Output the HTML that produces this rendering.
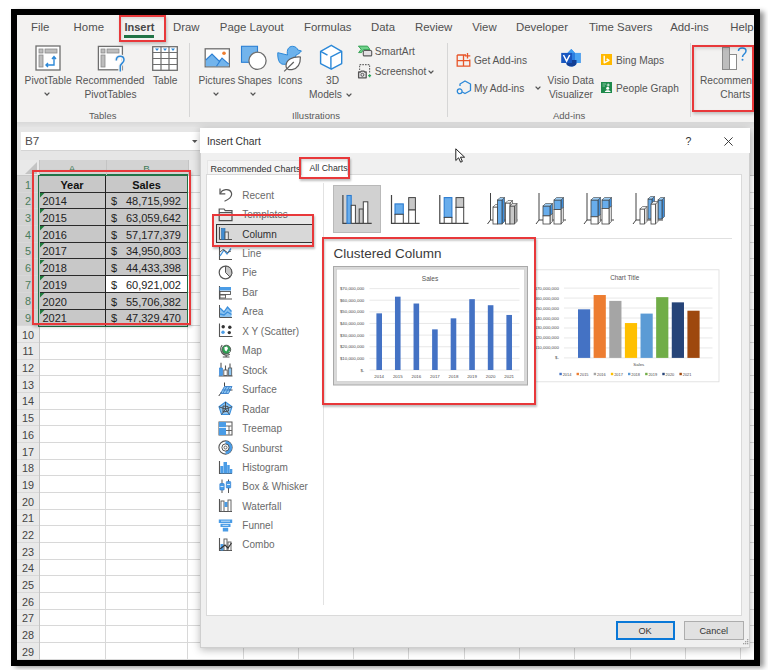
<!DOCTYPE html>
<html><head><meta charset="utf-8">
<style>
*{margin:0;padding:0;box-sizing:border-box}
html,body{width:768px;height:670px;overflow:hidden;background:#fff;font-family:"Liberation Sans",sans-serif}
.a{position:absolute}
.t{position:absolute;white-space:nowrap;line-height:1;font-family:"Liberation Sans",sans-serif}
#scr{position:absolute;left:0;top:0;width:768px;height:670px;clip-path:inset(15px 14px 10px 17px);background:#fff}
#frame{position:absolute;left:11px;top:9px;width:749px;height:657px;border:6px solid #000;box-shadow:4px 1.5px 5px rgba(0,0,0,.42)}
/* ribbon */
#ribbon{left:17px;top:15px;width:737px;height:107px;background:#f3f2f1}
.tab{font-size:11.4px;color:#505050;top:21.5px}
.rl{font-size:10.2px;color:#555;margin-top:0.8px}
.gl{font-size:9.5px;color:#5a5a5a}
.sep{width:1px;background:#d6d6d6}
/* sheet */
.rh{font-size:11px;color:#444;text-align:right}
.cell{font-size:11px;color:#111}
</style></head><body>
<div id="scr">
  <div class="a" id="ribbon"></div>
  <!-- tabs -->
  <div class="t tab" style="left:31px">File</div>
  <div class="t tab" style="left:73.6px">Home</div>
  <div class="t tab" style="left:124.4px;font-weight:bold;font-size:11px;color:#474747;top:21.5px">Insert</div>
  <div class="a" style="left:124px;top:35px;width:30px;height:3px;background:#217346"></div>
  <div class="a" style="left:118.5px;top:15.4px;width:47.6px;height:26.3px;border:2.3px solid #e8383a;box-shadow:1px 2px 3px rgba(0,0,0,.22), inset 1px 2px 3px rgba(0,0,0,.1)"></div>
  <div class="t tab" style="left:173px">Draw</div>
  <div class="t tab" style="left:219.8px">Page Layout</div>
  <div class="t tab" style="left:304px">Formulas</div>
  <div class="t tab" style="left:371px">Data</div>
  <div class="t tab" style="left:415px">Review</div>
  <div class="t tab" style="left:472.2px">View</div>
  <div class="t tab" style="left:516px">Developer</div>
  <div class="t tab" style="left:589px">Time Savers</div>
  <div class="t tab" style="left:670.2px">Add-ins</div>
  <div class="t tab" style="left:730.2px">Help</div>
  <!-- group separators -->
  <div class="a sep" style="left:189px;top:43px;height:74px"></div>
  <div class="a sep" style="left:447px;top:43px;height:74px"></div>
  <div class="a sep" style="left:690px;top:43px;height:74px"></div>
  <!-- Tables group -->
  <svg class="a" style="left:35px;top:45px" width="26" height="26" viewBox="0 0 26 26">
    <rect x="1" y="1" width="24" height="24" fill="#fff" stroke="#6e6e6e" stroke-width="1.3"/>
    <rect x="4" y="4" width="4" height="4" fill="#bdbdbd" stroke="#8a8a8a" stroke-width=".8"/>
    <rect x="10" y="4" width="12" height="4" fill="#bdbdbd" stroke="#8a8a8a" stroke-width=".8"/>
    <rect x="4" y="10" width="4" height="12" fill="#bdbdbd" stroke="#8a8a8a" stroke-width=".8"/>
    <path d="M11 20 H19 V12 M17 14 L19 11.5 L21 14 M13 18 L11 20 L13 22" fill="none" stroke="#2b88d8" stroke-width="1.4"/>
  </svg>
  <svg class="a" style="left:97px;top:45px" width="29" height="28" viewBox="0 0 29 28">
    <rect x="1.4" y="1.4" width="24" height="23.4" fill="#fff" stroke="#6e6e6e" stroke-width="1.3"/>
    <rect x="4" y="4" width="4" height="4" fill="#bdbdbd" stroke="#8a8a8a" stroke-width=".8"/>
    <rect x="10" y="4" width="12" height="4" fill="#bdbdbd" stroke="#8a8a8a" stroke-width=".8"/>
    <rect x="4" y="10" width="4" height="12" fill="#bdbdbd" stroke="#8a8a8a" stroke-width=".8"/>
    <path d="M19.3 15.5 C19.3 12.5 21.3 11.3 23.2 11.3 C25.4 11.3 27 12.8 27 15 C27 17.8 23.3 18.5 23.3 21.5 V27" fill="none" stroke="#f3f2f1" stroke-width="4"/>
    <path d="M19.3 15.5 C19.3 12.5 21.3 11.3 23.2 11.3 C25.4 11.3 27 12.8 27 15 C27 17.8 23.3 18.5 23.3 21.5 V26.5" fill="none" stroke="#2b88d8" stroke-width="1.5"/>
  </svg>
  <svg class="a" style="left:152px;top:46px" width="26" height="25" viewBox="0 0 26 25">
    <rect x="0.7" y="0.7" width="24.6" height="23.6" fill="#fff" stroke="#6e6e6e" stroke-width="1.3"/>
    <path d="M0.7 6.5 H25.3 M0.7 12.5 H25.3 M0.7 18.5 H25.3 M9 0.7 V24.3 M17 0.7 V24.3" stroke="#6e6e6e" stroke-width="1.2"/>
    <path d="M3 2.5 L7 2.5 L5 5 Z M11 2.5 L15 2.5 L13 5 Z M19 2.5 L23 2.5 L21 5 Z" fill="#2b88d8"/>
  </svg>
  <div class="t rl" style="left:24.6px;top:75.5px">PivotTable</div>
  <div class="t rl" style="left:75.4px;top:75.5px">Recommended</div>
  <div class="t rl" style="left:84.5px;top:89.5px">PivotTables</div>
  <div class="t rl" style="left:153px;top:75.5px">Table</div>
  <svg class="a" style="left:44px;top:92px" width="6" height="4" viewBox="0 0 6 4"><path d="M.6 .6 L3 3 L5.4 .6" fill="none" stroke="#555" stroke-width="1.25"/></svg>
  <div class="t gl" style="left:89px;top:110.5px">Tables</div>
  <!-- Illustrations group -->
  <svg class="a" style="left:203.5px;top:48px" width="26" height="20" viewBox="0 0 26 20">
    <rect x="1.2" y="0.8" width="24.2" height="18" fill="#fff" stroke="#6e6e6e" stroke-width="1.3"/>
    <path d="M1.8 18.2 L1.8 12 L8 6 L14.5 12.5 L18 10 L24.8 16.2 L24.8 18.2 Z" fill="#72b4ec"/>
    <path d="M1.8 12 L8 6 L16 14 M12.5 18.2 L18 10 L24.8 16.2" fill="none" stroke="#2b7fd4" stroke-width="1.1"/>
    <circle cx="20" cy="5.3" r="1.8" fill="#ed7d31"/>
  </svg>
  <svg class="a" style="left:240px;top:45px" width="28" height="26" viewBox="0 0 28 26">
    <rect x="1.5" y="1.3" width="16" height="16" fill="#72b4ec" stroke="#2b7fd4" stroke-width="1.1"/>
    <circle cx="17.5" cy="15.8" r="8.6" fill="#fff" stroke="#6e6e6e" stroke-width="1.3"/>
  </svg>
  <svg class="a" style="left:272px;top:42px" width="34" height="34" viewBox="0 0 34 34">
    <path d="M5.8 10.7 L15.5 13 C14.5 8 16.5 4.3 20.5 4.3 C23.5 4.3 25.5 6.5 25.8 8 L29.4 8.9 C28 11 26 12.5 24 13 L22 20 C19 22 14 22.5 11.2 22.3 C7 22 5.5 17 5.8 10.7 Z" fill="#6cb2ec" stroke="#2b88d8" stroke-width="1"/>
    <path d="M28.4 15 C20 14.5 14 18 14 24 C14 27.5 17 28 20 27.6 C26 26.5 28.5 21 28.4 15 Z" fill="#fff" stroke="#5e5e5e" stroke-width="1.2"/>
    <path d="M12.2 29.4 L21.8 20" fill="none" stroke="#5e5e5e" stroke-width="1.2"/>
  </svg>
  <svg class="a" style="left:314px;top:40px" width="34" height="34" viewBox="314 40 34 34">
    <path d="M331.3 45.3 L341.7 51.3 V63.6 L331.3 69.2 L320.6 63.6 V51.3 Z" fill="#fff" stroke="#2b88d8" stroke-width="1.4" stroke-linejoin="round"/>
    <path d="M341.7 51.3 L330.9 57 V69 M320.6 51.3 L327.5 55.2" fill="none" stroke="#2b88d8" stroke-width="1.4"/>
  </svg>
  <div class="t rl" style="left:198.5px;top:75.5px">Pictures</div>
  <div class="t rl" style="left:237.4px;top:75.5px">Shapes</div>
  <div class="t rl" style="left:278px;top:75.5px">Icons</div>
  <div class="t rl" style="left:326px;top:75.5px">3D</div>
  <div class="t rl" style="left:309px;top:89.5px">Models</div>
  <svg class="a" style="left:213px;top:92px" width="6" height="4" viewBox="0 0 6 4"><path d="M.6 .6 L3 3 L5.4 .6" fill="none" stroke="#555" stroke-width="1.25"/></svg>
  <svg class="a" style="left:250px;top:92px" width="6" height="4" viewBox="0 0 6 4"><path d="M.6 .6 L3 3 L5.4 .6" fill="none" stroke="#555" stroke-width="1.25"/></svg>
  <svg class="a" style="left:346px;top:93px" width="6" height="4" viewBox="0 0 6 4"><path d="M.6 .6 L3 3 L5.4 .6" fill="none" stroke="#555" stroke-width="1.25"/></svg>
  <svg class="a" style="left:357px;top:45px" width="16" height="12" viewBox="0 0 16 12">
    <path d="M1.4 1.1 L10.5 1.1 L13 4.5 L6.5 4.5 L4.5 7.6 L1.6 7.6 L4.2 4.3 Z" fill="#6fd08a" stroke="#2e9e4e" stroke-width=".9" stroke-linejoin="round"/>
    <rect x="6.3" y="5.5" width="8.4" height="5.4" rx="1" fill="#e4e0e4" stroke="#5a5a5a" stroke-width="1.1"/>
  </svg>
  <svg class="a" style="left:355px;top:62px" width="20" height="18" viewBox="0 0 20 18">
    <path d="M4.6 8 V2.6 H14.6 V11" fill="none" stroke="#666" stroke-width="1.1" stroke-dasharray="1.6 1.1"/>
    <path d="M3.6 10 H5.5 L6.3 9.2 H9 L9.8 10 H11.2 V15.8 H3.6 Z" fill="#e8e6e8" stroke="#555" stroke-width="1.3" stroke-linejoin="round"/>
    <circle cx="7.4" cy="12.8" r="1.5" fill="none" stroke="#555" stroke-width="1"/>
    <path d="M14.6 12.2 V15.2 M13.1 13.7 H16.1" stroke="#2ea55a" stroke-width="1.3"/>
  </svg>
  <div class="t rl" style="left:374.7px;top:46.5px">SmartArt</div>
  <div class="t rl" style="left:374.7px;top:66.5px">Screenshot</div>
  <svg class="a" style="left:428px;top:70px" width="6" height="4" viewBox="0 0 6 4"><path d="M.6 .6 L3 3 L5.4 .6" fill="none" stroke="#555" stroke-width="1.25"/></svg>
  <div class="t gl" style="left:292px;top:110.5px">Illustrations</div>
  <!-- Add-ins group -->
  <svg class="a" style="left:456px;top:52px" width="16" height="16" viewBox="0 0 16 16">
    <path d="M1.2 3 H10 M1.2 3 V14.2 H13.8 V7.5 M1.2 8.6 H13.8 M7.5 3 V14.2" fill="none" stroke="#e8562a" stroke-width="1.3"/>
    <path d="M11.5 1 V6.5 M8.8 3.8 H14.3" stroke="#e8562a" stroke-width="1.3"/>
  </svg>
  <svg class="a" style="left:456px;top:79.5px" width="16" height="15" viewBox="0 0 16 15">
    <path d="M4 6 V4 L9 1 L14.5 4 V10.5 L9 13.5 L6.3 12" fill="none" stroke="#2b88d8" stroke-width="1.3" stroke-linejoin="round"/>
    <circle cx="3.7" cy="11.3" r="2.4" fill="none" stroke="#2b88d8" stroke-width="1.3"/>
  </svg>
  <div class="t rl" style="left:473.9px;top:55px">Get Add-ins</div>
  <div class="t rl" style="left:473.9px;top:83px">My Add-ins</div>
  <svg class="a" style="left:535px;top:86px" width="6" height="4" viewBox="0 0 6 4"><path d="M.6 .6 L3 3 L5.4 .6" fill="none" stroke="#555" stroke-width="1.25"/></svg>
  <svg class="a" style="left:556px;top:44px" width="30" height="26" viewBox="0 0 30 26">
    <path d="M15.3 5 L19 8.9 H24.6 V19 H20.5 C20.5 21 18 22.6 15.3 22.6 C12.5 22.6 10.3 21 10.3 19 V8.9 H11.5 Z" fill="#2a7ee0"/>
    <path d="M15.3 5 L19 8.9 H11.5 Z" fill="#3d9bf0"/>
    <path d="M19 8.9 H24.6 V19 H19 Z" fill="#4aa3f2"/>
    <path d="M10.3 16 H20.5 V19 C20.5 21 18 22.6 15.3 22.6 C12.5 22.6 10.3 21 10.3 19 Z" fill="#133f94"/>
    <rect x="5.2" y="8.9" width="10.8" height="10.1" fill="#1857c0"/>
    <path d="M7.5 11 L10.6 17 L13.7 11" fill="none" stroke="#fff" stroke-width="1.5"/>
  </svg>
  <div class="t rl" style="left:547.6px;top:75.5px">Visio Data</div>
  <div class="t rl" style="left:549px;top:89.5px">Visualizer</div>
  <svg class="a" style="left:600.5px;top:53.5px" width="11" height="11" viewBox="0 0 11 11">
    <rect x="0" y="0" width="11" height="11" fill="#ffb900"/>
    <path d="M3.2 1.8 V8.8 L8 6.4 L5.6 4.8" fill="none" stroke="#fff" stroke-width="1.4" stroke-linejoin="round"/>
  </svg>
  <svg class="a" style="left:600.5px;top:81.5px" width="11" height="11" viewBox="0 0 11 11">
    <rect x="0" y="0" width="11" height="11" fill="#1f8a4c"/>
    <path d="M1.5 2 H5 M1.5 4 H4" stroke="#9fd8b5" stroke-width=".8"/>
    <path d="M7.2 1.5 V4.5 M5.7 3 H8.7" stroke="#fff" stroke-width=".8"/>
    <circle cx="6.7" cy="6.3" r="1.5" fill="#fff"/>
    <path d="M3.8 10 C4 7.5 9.5 7.5 9.7 10 Z" fill="#fff"/>
  </svg>
  <div class="t rl" style="left:616px;top:55px">Bing Maps</div>
  <div class="t rl" style="left:616px;top:83px">People Graph</div>
  <div class="t gl" style="left:553px;top:110.5px">Add-ins</div>
  <!-- Recommended Charts -->
  <svg class="a" style="left:721px;top:46px" width="28" height="25" viewBox="0 0 28 25">
    <rect x="1.5" y="1.5" width="7" height="22" fill="#bdbdbd" stroke="#8a8a8a" stroke-width="1"/>
    <rect x="8.5" y="8.5" width="7" height="15" fill="#fff" stroke="#8a8a8a" stroke-width="1"/>
    <path d="M17.5 5 C17.5 1 25 1 25 5 C25 8 21.5 8 21.5 11" fill="none" stroke="#2b88d8" stroke-width="1.5"/>
    <circle cx="21.5" cy="13.8" r="1" fill="#2b88d8"/>
  </svg>
  <div class="t rl" style="left:699.9px;top:75.5px">Recommended</div>
  <div class="t rl" style="left:720.3px;top:89.5px">Charts</div>
  <div class="a" style="left:691.5px;top:45px;width:62.5px;height:67px;border:2.2px solid #e8383a;box-shadow:1px 2px 3px rgba(0,0,0,.22), inset 1px 2px 3px rgba(0,0,0,.12)"></div>

  <div class="a" style="left:17px;top:122px;width:737px;height:5px;background:linear-gradient(#d9d9d9,#e3e3e3)"></div>
  <!-- formula bar area -->
  <div class="a" style="left:17px;top:127px;width:737px;height:33px;background:#e6e6e6"></div>
  <div class="a" style="left:21px;top:132px;width:184px;height:19px;background:#fff;border-bottom:1px solid #d4d4d4"></div>
  <svg class="a" style="left:191.5px;top:139.5px" width="6" height="4" viewBox="0 0 6 4"><path d="M0 0 H5.5 L2.75 3 Z" fill="#555"/></svg>
  <div class="t" style="left:25px;top:136px;font-size:11.8px;color:#505050">B7</div>
  <!-- column headers -->
  <div class="a" style="left:17px;top:160px;width:737px;height:16px;background:#e9e9e9;border-bottom:1px solid #c8c8c8"></div>
  <div class="a" style="left:39px;top:160px;width:149px;height:16px;background:#d3d3d3;border-bottom:2px solid #217346"></div>
  <svg class="a" style="left:17px;top:160px" width="22" height="16" viewBox="0 0 22 16"><path d="M20 2 L20 14 L8 14 Z" fill="#c4c4c4"/></svg>
  <div class="a" style="left:39.0px;top:160px;width:1px;height:15.6px;background:#c4c4c4"></div>
  <div class="a" style="left:105.5px;top:160px;width:1px;height:15.6px;background:#c4c4c4"></div>
  <div class="a" style="left:187.5px;top:160px;width:1px;height:15.6px;background:#c4c4c4"></div>
  <div class="a" style="left:243.25px;top:160px;width:1px;height:15.6px;background:#c4c4c4"></div>
  <div class="a" style="left:298.50px;top:160px;width:1px;height:15.6px;background:#c4c4c4"></div>
  <div class="a" style="left:353.75px;top:160px;width:1px;height:15.6px;background:#c4c4c4"></div>
  <div class="a" style="left:409.00px;top:160px;width:1px;height:15.6px;background:#c4c4c4"></div>
  <div class="a" style="left:464.25px;top:160px;width:1px;height:15.6px;background:#c4c4c4"></div>
  <div class="a" style="left:519.50px;top:160px;width:1px;height:15.6px;background:#c4c4c4"></div>
  <div class="a" style="left:574.75px;top:160px;width:1px;height:15.6px;background:#c4c4c4"></div>
  <div class="a" style="left:630.00px;top:160px;width:1px;height:15.6px;background:#c4c4c4"></div>
  <div class="a" style="left:685.25px;top:160px;width:1px;height:15.6px;background:#c4c4c4"></div>
  <div class="a" style="left:740.50px;top:160px;width:1px;height:15.6px;background:#c4c4c4"></div>
  <div class="a" style="left:795.75px;top:160px;width:1px;height:15.6px;background:#c4c4c4"></div>
  <div class="t" style="left:68.8px;top:163.5px;font-size:9.8px;color:#3f7a56">A</div>
  <div class="t" style="left:143.3px;top:163.5px;font-size:9.8px;color:#3f7a56">B</div>
  <!-- grid -->
  <div class="a" style="left:17px;top:175.6px;width:737px;height:490px;background:#fff"></div>
  <div class="a" style="left:17px;top:175.6px;width:22px;height:490px;background:#e9e9e9"></div>
  <div class="a" style="left:17px;top:175.6px;width:22px;height:150.12px;background:#d3d3d3"></div>
  <div class="a" style="left:39px;top:175.6px;width:149px;height:150.12px;background:#c8c8c8"></div>
  <div class="a" style="left:105.5px;top:275.68px;width:82px;height:16.68px;background:#fff"></div>
  <div class="a" style="left:17px;top:192px;width:737px;height:1px;background:#d8d8d8"></div>
  <div class="a" style="left:17px;top:208px;width:737px;height:1px;background:#d8d8d8"></div>
  <div class="a" style="left:17px;top:225px;width:737px;height:1px;background:#d8d8d8"></div>
  <div class="a" style="left:17px;top:242px;width:737px;height:1px;background:#d8d8d8"></div>
  <div class="a" style="left:17px;top:258px;width:737px;height:1px;background:#d8d8d8"></div>
  <div class="a" style="left:17px;top:275px;width:737px;height:1px;background:#d8d8d8"></div>
  <div class="a" style="left:17px;top:292px;width:737px;height:1px;background:#d8d8d8"></div>
  <div class="a" style="left:17px;top:309px;width:737px;height:1px;background:#d8d8d8"></div>
  <div class="a" style="left:17px;top:325px;width:737px;height:1px;background:#d8d8d8"></div>
  <div class="a" style="left:17px;top:342px;width:737px;height:1px;background:#d8d8d8"></div>
  <div class="a" style="left:17px;top:359px;width:737px;height:1px;background:#d8d8d8"></div>
  <div class="a" style="left:17px;top:375px;width:737px;height:1px;background:#d8d8d8"></div>
  <div class="a" style="left:17px;top:392px;width:737px;height:1px;background:#d8d8d8"></div>
  <div class="a" style="left:17px;top:409px;width:737px;height:1px;background:#d8d8d8"></div>
  <div class="a" style="left:17px;top:425px;width:737px;height:1px;background:#d8d8d8"></div>
  <div class="a" style="left:17px;top:442px;width:737px;height:1px;background:#d8d8d8"></div>
  <div class="a" style="left:17px;top:459px;width:737px;height:1px;background:#d8d8d8"></div>
  <div class="a" style="left:17px;top:475px;width:737px;height:1px;background:#d8d8d8"></div>
  <div class="a" style="left:17px;top:492px;width:737px;height:1px;background:#d8d8d8"></div>
  <div class="a" style="left:17px;top:509px;width:737px;height:1px;background:#d8d8d8"></div>
  <div class="a" style="left:17px;top:525px;width:737px;height:1px;background:#d8d8d8"></div>
  <div class="a" style="left:17px;top:542px;width:737px;height:1px;background:#d8d8d8"></div>
  <div class="a" style="left:17px;top:559px;width:737px;height:1px;background:#d8d8d8"></div>
  <div class="a" style="left:17px;top:575px;width:737px;height:1px;background:#d8d8d8"></div>
  <div class="a" style="left:17px;top:592px;width:737px;height:1px;background:#d8d8d8"></div>
  <div class="a" style="left:17px;top:609px;width:737px;height:1px;background:#d8d8d8"></div>
  <div class="a" style="left:17px;top:625px;width:737px;height:1px;background:#d8d8d8"></div>
  <div class="a" style="left:17px;top:642px;width:737px;height:1px;background:#d8d8d8"></div>
  <div class="a" style="left:17px;top:659px;width:737px;height:1px;background:#d8d8d8"></div>
  <div class="a" style="left:39px;top:192px;width:149px;height:1px;background:#2a2a2a"></div>
  <div class="a" style="left:39px;top:208px;width:149px;height:1px;background:#2a2a2a"></div>
  <div class="a" style="left:39px;top:225px;width:149px;height:1px;background:#2a2a2a"></div>
  <div class="a" style="left:39px;top:242px;width:149px;height:1px;background:#2a2a2a"></div>
  <div class="a" style="left:39px;top:258px;width:149px;height:1px;background:#2a2a2a"></div>
  <div class="a" style="left:39px;top:275px;width:149px;height:1px;background:#2a2a2a"></div>
  <div class="a" style="left:39px;top:292px;width:149px;height:1px;background:#2a2a2a"></div>
  <div class="a" style="left:39px;top:309px;width:149px;height:1px;background:#2a2a2a"></div>
  <div class="a" style="left:38.5px;top:175.6px;width:1px;height:490px;background:#c4c4c4"></div>
  <div class="a" style="left:105px;top:175.6px;width:1px;height:490px;background:#d8d8d8"></div>
  <div class="a" style="left:187px;top:175.6px;width:1px;height:490px;background:#d8d8d8"></div>
  <div class="a" style="left:243px;top:175.6px;width:1px;height:490px;background:#d8d8d8"></div>
  <div class="a" style="left:298px;top:175.6px;width:1px;height:490px;background:#d8d8d8"></div>
  <div class="a" style="left:353px;top:175.6px;width:1px;height:490px;background:#d8d8d8"></div>
  <div class="a" style="left:408px;top:175.6px;width:1px;height:490px;background:#d8d8d8"></div>
  <div class="a" style="left:464px;top:175.6px;width:1px;height:490px;background:#d8d8d8"></div>
  <div class="a" style="left:519px;top:175.6px;width:1px;height:490px;background:#d8d8d8"></div>
  <div class="a" style="left:574px;top:175.6px;width:1px;height:490px;background:#d8d8d8"></div>
  <div class="a" style="left:630px;top:175.6px;width:1px;height:490px;background:#d8d8d8"></div>
  <div class="a" style="left:685px;top:175.6px;width:1px;height:490px;background:#d8d8d8"></div>
  <div class="a" style="left:740px;top:175.6px;width:1px;height:490px;background:#d8d8d8"></div>
  <div class="a" style="left:795px;top:175.6px;width:1px;height:490px;background:#d8d8d8"></div>
  <div class="a" style="left:105px;top:175.6px;width:1px;height:150.12px;background:#222"></div>
  <div class="t" style="left:17px;width:22px;text-align:center;top:179.64px;font-size:10.8px;color:#4a7d5c">1</div>
  <div class="t" style="left:17px;width:22px;text-align:center;top:196.32px;font-size:10.8px;color:#4a7d5c">2</div>
  <div class="t" style="left:17px;width:22px;text-align:center;top:213.00px;font-size:10.8px;color:#4a7d5c">3</div>
  <div class="t" style="left:17px;width:22px;text-align:center;top:229.68px;font-size:10.8px;color:#4a7d5c">4</div>
  <div class="t" style="left:17px;width:22px;text-align:center;top:246.36px;font-size:10.8px;color:#4a7d5c">5</div>
  <div class="t" style="left:17px;width:22px;text-align:center;top:263.04px;font-size:10.8px;color:#4a7d5c">6</div>
  <div class="t" style="left:17px;width:22px;text-align:center;top:279.72px;font-size:10.8px;color:#4a7d5c">7</div>
  <div class="t" style="left:17px;width:22px;text-align:center;top:296.40px;font-size:10.8px;color:#4a7d5c">8</div>
  <div class="t" style="left:17px;width:22px;text-align:center;top:313.08px;font-size:10.8px;color:#4a7d5c">9</div>
  <div class="t" style="left:17px;width:22px;text-align:center;top:329.76px;font-size:10.8px;color:#444">10</div>
  <div class="t" style="left:17px;width:22px;text-align:center;top:346.44px;font-size:10.8px;color:#444">11</div>
  <div class="t" style="left:17px;width:22px;text-align:center;top:363.12px;font-size:10.8px;color:#444">12</div>
  <div class="t" style="left:17px;width:22px;text-align:center;top:379.80px;font-size:10.8px;color:#444">13</div>
  <div class="t" style="left:17px;width:22px;text-align:center;top:396.48px;font-size:10.8px;color:#444">14</div>
  <div class="t" style="left:17px;width:22px;text-align:center;top:413.16px;font-size:10.8px;color:#444">15</div>
  <div class="t" style="left:17px;width:22px;text-align:center;top:429.84px;font-size:10.8px;color:#444">16</div>
  <div class="t" style="left:17px;width:22px;text-align:center;top:446.52px;font-size:10.8px;color:#444">17</div>
  <div class="t" style="left:17px;width:22px;text-align:center;top:463.20px;font-size:10.8px;color:#444">18</div>
  <div class="t" style="left:17px;width:22px;text-align:center;top:479.88px;font-size:10.8px;color:#444">19</div>
  <div class="t" style="left:17px;width:22px;text-align:center;top:496.56px;font-size:10.8px;color:#444">20</div>
  <div class="t" style="left:17px;width:22px;text-align:center;top:513.24px;font-size:10.8px;color:#444">21</div>
  <div class="t" style="left:17px;width:22px;text-align:center;top:529.92px;font-size:10.8px;color:#444">22</div>
  <div class="t" style="left:17px;width:22px;text-align:center;top:546.60px;font-size:10.8px;color:#444">23</div>
  <div class="t" style="left:17px;width:22px;text-align:center;top:563.28px;font-size:10.8px;color:#444">24</div>
  <div class="t" style="left:17px;width:22px;text-align:center;top:579.96px;font-size:10.8px;color:#444">25</div>
  <div class="t" style="left:17px;width:22px;text-align:center;top:596.64px;font-size:10.8px;color:#444">26</div>
  <div class="t" style="left:17px;width:22px;text-align:center;top:613.32px;font-size:10.8px;color:#444">27</div>
  <div class="t" style="left:17px;width:22px;text-align:center;top:630.00px;font-size:10.8px;color:#444">28</div>
  <div class="t" style="left:17px;width:22px;text-align:center;top:646.68px;font-size:10.8px;color:#444">29</div>
  <div class="t" style="left:39px;width:66px;text-align:center;top:179.54px;font-size:11px;font-weight:bold;color:#111">Year</div>
  <div class="t" style="left:105.5px;width:82px;text-align:center;top:179.54px;font-size:11px;font-weight:bold;color:#111">Sales</div>
  <div class="t" style="left:42.5px;top:196.42px;font-size:11px;color:#222">2014</div>
  <div class="t" style="left:111px;top:196.42px;font-size:11px;color:#222">$</div>
  <div class="t" style="left:120px;width:61px;text-align:right;top:196.42px;font-size:11px;color:#222">48,715,992</div>
  <svg class="a" style="left:40px;top:192.78px" width="5" height="5" viewBox="0 0 5 5"><path d="M0 0 H4.5 L0 4.5 Z" fill="#1e7a3c"/></svg>
  <div class="t" style="left:42.5px;top:213.10px;font-size:11px;color:#222">2015</div>
  <div class="t" style="left:111px;top:213.10px;font-size:11px;color:#222">$</div>
  <div class="t" style="left:120px;width:61px;text-align:right;top:213.10px;font-size:11px;color:#222">63,059,642</div>
  <svg class="a" style="left:40px;top:209.46px" width="5" height="5" viewBox="0 0 5 5"><path d="M0 0 H4.5 L0 4.5 Z" fill="#1e7a3c"/></svg>
  <div class="t" style="left:42.5px;top:229.78px;font-size:11px;color:#222">2016</div>
  <div class="t" style="left:111px;top:229.78px;font-size:11px;color:#222">$</div>
  <div class="t" style="left:120px;width:61px;text-align:right;top:229.78px;font-size:11px;color:#222">57,177,379</div>
  <svg class="a" style="left:40px;top:226.14px" width="5" height="5" viewBox="0 0 5 5"><path d="M0 0 H4.5 L0 4.5 Z" fill="#1e7a3c"/></svg>
  <div class="t" style="left:42.5px;top:246.46px;font-size:11px;color:#222">2017</div>
  <div class="t" style="left:111px;top:246.46px;font-size:11px;color:#222">$</div>
  <div class="t" style="left:120px;width:61px;text-align:right;top:246.46px;font-size:11px;color:#222">34,950,803</div>
  <svg class="a" style="left:40px;top:242.82px" width="5" height="5" viewBox="0 0 5 5"><path d="M0 0 H4.5 L0 4.5 Z" fill="#1e7a3c"/></svg>
  <div class="t" style="left:42.5px;top:263.14px;font-size:11px;color:#222">2018</div>
  <div class="t" style="left:111px;top:263.14px;font-size:11px;color:#222">$</div>
  <div class="t" style="left:120px;width:61px;text-align:right;top:263.14px;font-size:11px;color:#222">44,433,398</div>
  <svg class="a" style="left:40px;top:259.50px" width="5" height="5" viewBox="0 0 5 5"><path d="M0 0 H4.5 L0 4.5 Z" fill="#1e7a3c"/></svg>
  <div class="t" style="left:42.5px;top:279.82px;font-size:11px;color:#222">2019</div>
  <div class="t" style="left:111px;top:279.82px;font-size:11px;color:#222">$</div>
  <div class="t" style="left:120px;width:61px;text-align:right;top:279.82px;font-size:11px;color:#222">60,921,002</div>
  <svg class="a" style="left:40px;top:276.18px" width="5" height="5" viewBox="0 0 5 5"><path d="M0 0 H4.5 L0 4.5 Z" fill="#1e7a3c"/></svg>
  <div class="t" style="left:42.5px;top:296.50px;font-size:11px;color:#222">2020</div>
  <div class="t" style="left:111px;top:296.50px;font-size:11px;color:#222">$</div>
  <div class="t" style="left:120px;width:61px;text-align:right;top:296.50px;font-size:11px;color:#222">55,706,382</div>
  <svg class="a" style="left:40px;top:292.86px" width="5" height="5" viewBox="0 0 5 5"><path d="M0 0 H4.5 L0 4.5 Z" fill="#1e7a3c"/></svg>
  <div class="t" style="left:42.5px;top:313.18px;font-size:11px;color:#222">2021</div>
  <div class="t" style="left:111px;top:313.18px;font-size:11px;color:#222">$</div>
  <div class="t" style="left:120px;width:61px;text-align:right;top:313.18px;font-size:11px;color:#222">47,329,470</div>
  <svg class="a" style="left:40px;top:309.54px" width="5" height="5" viewBox="0 0 5 5"><path d="M0 0 H4.5 L0 4.5 Z" fill="#1e7a3c"/></svg>
  <div class="a" style="left:38.2px;top:175px;width:150.2px;height:152px;border:1.5px solid #217346"></div>
  <div class="a" style="left:31.8px;top:170px;width:159.2px;height:155.4px;border:2.5px solid #e8383a;box-shadow:1px 2px 3px rgba(0,0,0,.22)"></div>
  <!-- dialog -->
  <div class="a" style="left:200px;top:128px;width:550px;height:520px;background:#f0f0f0;box-shadow:0 2px 8px rgba(0,0,0,.28);border:1px solid #cfcfcf"></div>
  <div class="a" style="left:200px;top:128px;width:550px;height:25.2px;background:#fff"></div>
  <div class="t" style="left:207px;top:137.3px;font-size:10.3px;color:#333">Insert Chart</div>
  <div class="t" style="left:685.5px;top:135.5px;font-size:10.5px;color:#333">?</div>
  <svg class="a" style="left:724px;top:136.5px" width="9" height="9" viewBox="0 0 9 9"><path d="M.4 .4 L8.6 8.6 M8.6 .4 L.4 8.6" stroke="#333" stroke-width="0.95"/></svg>
  <div class="a" style="left:207px;top:160px;width:95px;height:16px;background:#f5f5f5;border:1px solid #e6e6e6;border-bottom:none"></div>
  <div class="t" style="left:210.5px;top:165px;font-size:9px;color:#333">Recommended Charts</div>
  <div class="a" style="left:301px;top:158px;width:47px;height:18px;background:#fff;border:1px solid #dcdcdc;border-bottom:none"></div>
  <div class="t" style="left:309.5px;top:163.5px;font-size:8.8px;color:#333">All Charts</div>
  <div class="a" style="left:205.5px;top:174.4px;width:536.5px;height:442.1px;background:#fff;border:1px solid #dadada"></div>
  <div class="a" style="left:323px;top:183px;width:1px;height:422px;background:#e2e2e2"></div>
  <div class="a" style="left:302px;top:173.5px;width:45px;height:2.5px;background:#fff"></div>
  <div class="a" style="left:299px;top:156.8px;width:50.7px;height:22.4px;border:2.3px solid #e8383a;box-shadow:1px 2px 2px rgba(0,0,0,.25), inset 1px 2px 3px rgba(0,0,0,.15)"></div>
  <!-- list -->
  <div class="a" style="left:216px;top:224px;width:97px;height:19px;background:#eeeeee;border:1px solid #3a3a3a;border-width:1.2px 0 1.2px 1px"></div>
  <div class="t" style="left:242.3px;top:190.8px;font-size:10px;color:#6a6a6a">Recent</div>
  <svg class="a" style="left:218px;top:187.4px" width="15" height="15" viewBox="0 0 15 15"><path d="M2 1.5 V6.8 H7.3" fill="none" stroke="#555" stroke-width="1.2"/><path d="M2.3 6.6 C4 2 11.5 1 13.3 5.5 C14.5 9 12 12 6.5 14.2" fill="none" stroke="#555" stroke-width="1.2"/></svg>
  <div class="t" style="left:242.3px;top:210.2px;font-size:10px;color:#6a6a6a">Templates</div>
  <svg class="a" style="left:218px;top:206.8px" width="15" height="15" viewBox="0 0 15 15"><path d="M1.2 2 H6 L7.2 3.6 H14 V13.6 H1.2 Z M1.2 5.6 H14" fill="none" stroke="#555" stroke-width="1.2"/></svg>
  <div class="t" style="left:242.3px;top:230.1px;font-size:10px;color:#333">Column</div>
  <svg class="a" style="left:218px;top:226.0px" width="15" height="15" viewBox="0 0 15 15"><path d="M1.5 1 V13.5 H14" fill="none" stroke="#555" stroke-width="1"/><rect x="3.5" y="2.5" width="3.5" height="11" fill="#4a9ce6" stroke="#2a78c0" stroke-width=".6"/><rect x="7" y="6" width="3.3" height="7.5" fill="#fff" stroke="#555" stroke-width=".9"/></svg>
  <div class="t" style="left:242.3px;top:248.9px;font-size:10px;color:#6a6a6a">Line</div>
  <svg class="a" style="left:218px;top:245.5px" width="15" height="15" viewBox="0 0 15 15"><path d="M1.5 1 V13.5 H14" fill="none" stroke="#555" stroke-width="1.1"/><path d="M2 10 L6 4 L9 8 L13 2.5" fill="none" stroke="#3b8fdc" stroke-width="1.3"/><path d="M2 6 L5 3.5 L9.5 6.5 L13 5" fill="none" stroke="#555" stroke-width="1"/></svg>
  <div class="t" style="left:242.3px;top:268.4px;font-size:10px;color:#6a6a6a">Pie</div>
  <svg class="a" style="left:218px;top:265.0px" width="15" height="15" viewBox="0 0 15 15"><circle cx="7.5" cy="7.5" r="6.3" fill="#fff" stroke="#555" stroke-width="1.2"/><path d="M7.5 1.2 V7.5 L12 12 A6.3 6.3 0 0 0 7.5 1.2 Z" fill="#c6c6c6" stroke="#555" stroke-width="1"/></svg>
  <div class="t" style="left:242.3px;top:287.9px;font-size:10px;color:#6a6a6a">Bar</div>
  <svg class="a" style="left:218px;top:284.5px" width="15" height="15" viewBox="0 0 15 15"><path d="M1.5 1 V14 H14" fill="none" stroke="#555" stroke-width="1.1"/><rect x="1.5" y="2" width="11.5" height="3.5" fill="#4a9ce6"/><rect x="2" y="6.5" width="10.5" height="3" fill="#fff" stroke="#555" stroke-width=".9"/><rect x="2" y="10" width="5.5" height="3" fill="#fff" stroke="#555" stroke-width=".9"/></svg>
  <div class="t" style="left:242.3px;top:307.4px;font-size:10px;color:#6a6a6a">Area</div>
  <svg class="a" style="left:218px;top:304.0px" width="15" height="15" viewBox="0 0 15 15"><path d="M1.5 1 V13.5 H14" fill="none" stroke="#555" stroke-width="1"/><path d="M2 4 L6 8 L9.5 3 L13.5 7.5 V13 H2 Z" fill="#8cc3f0"/><path d="M2 4 L6 8 L9.5 3 L13.5 7.5 M2 10 L6 11 L9.5 8 L13.5 10.5" fill="none" stroke="#3b8fdc" stroke-width="1.3"/></svg>
  <div class="t" style="left:242.3px;top:326.6px;font-size:10px;color:#6a6a6a">X Y (Scatter)</div>
  <svg class="a" style="left:218px;top:323.2px" width="15" height="15" viewBox="0 0 15 15"><path d="M1.5 0.5 V13.5 H14.5" fill="none" stroke="#555" stroke-width="1.1"/><circle cx="5.2" cy="3.8" r="1.7" fill="#333"/><circle cx="11.8" cy="4.3" r="1.7" fill="#333"/><circle cx="11.3" cy="9.6" r="1.7" fill="#333"/><circle cx="5" cy="9.3" r="1.7" fill="#4a9ce6"/></svg>
  <div class="t" style="left:242.3px;top:345.9px;font-size:10px;color:#6a6a6a">Map</div>
  <svg class="a" style="left:218px;top:342.5px" width="15" height="15" viewBox="0 0 15 15"><path d="M4.2 2.2 A6 6 0 0 0 11.8 11.3" fill="none" stroke="#555" stroke-width="1.2"/><circle cx="8.3" cy="6.6" r="4.4" fill="#2f9e52" stroke="#555" stroke-width=".9"/><path d="M6.3 4.3 L9 3.6 L10 5.6 L8.3 8.5 L6.8 7.3 Z M10.5 8.5 L11.5 7.8 L11.6 9.2 Z" fill="#fff"/><path d="M8.2 12.5 V13.8 M4.8 14 H11.5" fill="none" stroke="#555" stroke-width="1.2"/></svg>
  <div class="t" style="left:242.3px;top:365.5px;font-size:10px;color:#6a6a6a">Stock</div>
  <svg class="a" style="left:218px;top:362.1px" width="15" height="15" viewBox="0 0 15 15"><path d="M0.8 14 H14.5" stroke="#555" stroke-width="1"/><path d="M3 0.8 V6 M7.5 3.5 V8 M12 1.5 V6" stroke="#555" stroke-width="1.1"/><rect x="1.3" y="6" width="3.4" height="7.5" fill="#4a9ce6" stroke="#2a7bd0" stroke-width=".5"/><rect x="5.8" y="8" width="3.4" height="5.5" fill="#fff" stroke="#555" stroke-width=".9"/><rect x="10.3" y="6" width="3.4" height="7.5" fill="#8cc6f2" stroke="#555" stroke-width=".8"/></svg>
  <div class="t" style="left:242.3px;top:385.3px;font-size:10px;color:#6a6a6a">Surface</div>
  <svg class="a" style="left:218px;top:381.9px" width="15" height="15" viewBox="0 0 15 15"><path d="M2.5 11.5 L6.5 4.5 H14 L10.5 11.5 Z" fill="#8cc6f2"/><path d="M6.5 0.5 V4.5 M0.8 14 L3.5 10 M11 8 H14.5" fill="none" stroke="#444" stroke-width="1"/><path d="M2.5 11.5 L6.5 4.5 H14 L10.5 11.5 Z M4.5 8 H12.3 M8.8 4.5 L4.9 11.5 M11.5 4.5 L7.7 11.5" fill="none" stroke="#3a7fc9" stroke-width=".9"/></svg>
  <div class="t" style="left:242.3px;top:404.6px;font-size:10px;color:#6a6a6a">Radar</div>
  <svg class="a" style="left:218px;top:401.2px" width="15" height="15" viewBox="0 0 15 15"><path d="M7.5 1 L14 5.8 L11.5 13.5 L3.5 13.5 L1 5.8 Z" fill="#8cc3f0" stroke="#3b8fdc" stroke-width="1.1"/><path d="M7.5 1 L7.5 8 M14 5.8 L7.5 8 M11.5 13.5 L7.5 8 M3.5 13.5 L7.5 8 M1 5.8 L7.5 8 M5 5 L10 5.5 L10.5 10 L5 11 Z" fill="none" stroke="#444" stroke-width=".9"/></svg>
  <div class="t" style="left:242.3px;top:423.9px;font-size:10px;color:#6a6a6a">Treemap</div>
  <svg class="a" style="left:218px;top:420.5px" width="15" height="15" viewBox="0 0 15 15"><rect x="1" y="1" width="13" height="13" fill="#fff" stroke="#555" stroke-width="1"/><rect x="1" y="1" width="7" height="13" fill="#4a9ce6"/><path d="M1 6.5 H8 M8 5 H14 M11 5 V14 M8 9.5 H14" stroke="#fff" stroke-width=".8"/><path d="M8 5 H14 M11 5 V14 M8 9.5 H14" stroke="#555" stroke-width=".9"/></svg>
  <div class="t" style="left:242.3px;top:443.5px;font-size:10px;color:#6a6a6a">Sunburst</div>
  <svg class="a" style="left:218px;top:440.1px" width="15" height="15" viewBox="0 0 15 15"><circle cx="7.5" cy="7.5" r="6.6" fill="#fff" stroke="#555" stroke-width="1.1"/><path d="M7.5 0.9 A6.6 6.6 0 0 1 7.5 14.1 V11 A3.5 3.5 0 0 0 7.5 4 Z" fill="#4a9ce6"/><circle cx="7.5" cy="7.5" r="3.6" fill="none" stroke="#555" stroke-width="1"/><circle cx="7.5" cy="7.5" r="1.5" fill="none" stroke="#555" stroke-width=".9"/></svg>
  <div class="t" style="left:242.3px;top:462.9px;font-size:10px;color:#6a6a6a">Histogram</div>
  <svg class="a" style="left:218px;top:459.5px" width="15" height="15" viewBox="0 0 15 15"><path d="M1.5 1 V13.5 H14" fill="none" stroke="#555" stroke-width="1.1"/><rect x="2.3" y="6" width="3" height="7.5" fill="#4a9ce6"/><rect x="5.5" y="2" width="3.5" height="11.5" fill="#4a9ce6"/><rect x="9.2" y="5" width="2.5" height="8.5" fill="#4a9ce6"/><rect x="11.8" y="9" width="2.5" height="4.5" fill="#4a9ce6"/></svg>
  <div class="t" style="left:242.3px;top:481.9px;font-size:10px;color:#6a6a6a">Box &amp; Whisker</div>
  <svg class="a" style="left:218px;top:478.5px" width="15" height="15" viewBox="0 0 15 15"><path d="M4 0.5 V14 M10.5 0.5 V14" stroke="#555" stroke-width="1"/><rect x="1.8" y="4.5" width="4.4" height="6.5" rx=".6" fill="#4a9ce6" stroke="#2a7bd0" stroke-width=".6"/><rect x="8.3" y="2.5" width="4.4" height="6.5" rx=".6" fill="#4a9ce6" stroke="#2a7bd0" stroke-width=".6"/><path d="M2.5 7.5 H5.5 M9 5.5 H12" stroke="#fff" stroke-width=".8"/></svg>
  <div class="t" style="left:242.3px;top:501.7px;font-size:10px;color:#6a6a6a">Waterfall</div>
  <svg class="a" style="left:218px;top:498.3px" width="15" height="15" viewBox="0 0 15 15"><path d="M1.5 1 V13.5 H14" fill="none" stroke="#555" stroke-width="1.1"/><rect x="3" y="3" width="3" height="10.5" fill="#fff" stroke="#555" stroke-width=".9"/><rect x="6.5" y="4" width="3" height="5" fill="#4a9ce6"/><rect x="10" y="2" width="3" height="11.5" fill="#fff" stroke="#555" stroke-width=".9"/></svg>
  <div class="t" style="left:242.3px;top:520.9px;font-size:10px;color:#6a6a6a">Funnel</div>
  <svg class="a" style="left:218px;top:517.5px" width="15" height="15" viewBox="0 0 15 15"><path d="M0.8 1.5 H14.2 V5 H0.8 Z M2.5 5.8 H12.5 V9 H2.5 Z M4.8 9.8 H10.2 V13.5 H4.8 Z" fill="#4a9ce6"/><path d="M3 3.2 H12 M4.5 7.4 H10.5" stroke="#fff" stroke-width=".7"/></svg>
  <div class="t" style="left:242.3px;top:540.4px;font-size:10px;color:#6a6a6a">Combo</div>
  <svg class="a" style="left:218px;top:537.0px" width="15" height="15" viewBox="0 0 15 15"><path d="M1.5 1 V13.5 H14" fill="none" stroke="#555" stroke-width="1.1"/><rect x="2.5" y="7" width="3" height="6.5" fill="#4a9ce6"/><rect x="6" y="2" width="3" height="11.5" fill="#fff" stroke="#555" stroke-width=".9"/><rect x="10" y="5" width="3" height="8.5" fill="#fff" stroke="#555" stroke-width=".9"/><path d="M2 12 L7 8 L10 11 L13.5 6" fill="none" stroke="#333" stroke-width="1.2"/></svg>
  <div class="a" style="left:211.5px;top:214px;width:102px;height:33px;border:2.4px solid #e8383a;background:rgba(0,0,0,.09);box-shadow:1px 2px 2px rgba(0,0,0,.25)"></div>
  <!-- chart type icons -->
  <div class="a" style="left:333px;top:185px;width:48px;height:48px;background:#d1d1d1;border:1px solid #b9b9b9"></div>
  <svg class="a" style="left:330px;top:182px" width="400" height="54" viewBox="330 182 400 54">
<g stroke="#434343" stroke-width="1.2" fill="none"><path d="M342.9 195 V223.3 H371.7"/><path d="M391.5 195 V223.3 H419.6"/><path d="M439.8 195 V223.3 H468.5"/></g>
<rect x="347" y="195.5" width="4.2" height="27.8" fill="#68adec" stroke="#2a7bd0" stroke-width="1.1"/>
<rect x="351.2" y="205.3" width="4.2" height="18" fill="#fff" stroke="#434343" stroke-width="1"/>
<rect x="359.2" y="209" width="4.1" height="14.3" fill="#c8c8c8" stroke="#434343" stroke-width="1"/>
<rect x="363.3" y="201.8" width="4.5" height="21.5" fill="#fff" stroke="#434343" stroke-width="1"/>
<rect x="395" y="203.9" width="8.3" height="10.4" fill="#68adec" stroke="#2a7bd0" stroke-width="1.1"/>
<rect x="395" y="214.3" width="8.3" height="9" fill="#fff" stroke="#434343" stroke-width="1"/>
<rect x="408.7" y="197.6" width="6.7" height="12.4" fill="#c8c8c8" stroke="#434343" stroke-width="1"/>
<rect x="408.7" y="210" width="6.7" height="13.3" fill="#fff" stroke="#434343" stroke-width="1"/>
<rect x="444.2" y="197.6" width="7.7" height="19.8" fill="#68adec" stroke="#2a7bd0" stroke-width="1.1"/>
<rect x="444.2" y="217.4" width="7.7" height="5.9" fill="#fff" stroke="#434343" stroke-width="1"/>
<rect x="456" y="197.6" width="7.7" height="9.8" fill="#c8c8c8" stroke="#434343" stroke-width="1"/>
<rect x="456" y="207.4" width="7.7" height="15.9" fill="#fff" stroke="#434343" stroke-width="1"/>
</svg>
  <svg class="a" style="left:480px;top:182px" width="200" height="54" viewBox="480 182 200 54"><path d="M490.5 193 V220 L487.5 224 M490.5 220 H517.5" fill="none" stroke="#434343" stroke-width="1"/><path d="M497.5 207 L500.0 204.5 V221.5 L497.5 224 Z" fill="#dcdcdc" stroke="#434343" stroke-width=".6"/><rect x="493" y="207" width="4.5" height="17" fill="#fff" stroke="#434343" stroke-width=".8"/><path d="M493 207 L495.5 204.5 H500.0 L497.5 207 Z" fill="#f4f4f4" stroke="#434343" stroke-width=".6"/><path d="M502.0 200 L504.5 197.5 V221.5 L502.0 224 Z" fill="#3f8fdc" stroke="#434343" stroke-width=".6"/><rect x="497.5" y="200" width="4.5" height="24" fill="#68adec" stroke="#434343" stroke-width=".8"/><path d="M497.5 200 L500.0 197.5 H504.5 L502.0 200 Z" fill="#9ccdf5" stroke="#434343" stroke-width=".6"/><path d="M510.0 203 L512.5 200.5 V221.5 L510.0 224 Z" fill="#dcdcdc" stroke="#434343" stroke-width=".6"/><rect x="505.5" y="203" width="4.5" height="21" fill="#fff" stroke="#434343" stroke-width=".8"/><path d="M505.5 203 L508.0 200.5 H512.5 L510.0 203 Z" fill="#f4f4f4" stroke="#434343" stroke-width=".6"/><path d="M514.5 206 L517.0 203.5 V221.5 L514.5 224 Z" fill="#a8a8a8" stroke="#434343" stroke-width=".6"/><rect x="510" y="206" width="4.5" height="18" fill="#c8c8c8" stroke="#434343" stroke-width=".8"/><path d="M510 206 L512.5 203.5 H517.0 L514.5 206 Z" fill="#dedede" stroke="#434343" stroke-width=".6"/><path d="M539 193 V220 L536 224 M539 220 H566" fill="none" stroke="#434343" stroke-width="1"/><path d="M550 206 L552.5 203.5 V213.4 L550 215.9 Z" fill="#3f8fdc" stroke="#434343" stroke-width=".6"/><rect x="543" y="206" width="7" height="9.9" fill="#68adec" stroke="#434343" stroke-width=".8"/><path d="M550 215.9 L552.5 213.4 V221.5 L550 224.0 Z" fill="#dcdcdc" stroke="#434343" stroke-width=".6"/><rect x="543" y="215.9" width="7" height="8.1" fill="#fff" stroke="#434343" stroke-width=".8"/><path d="M543 206 L545.5 203.5 H552.5 L550 206 Z" fill="#9ccdf5" stroke="#434343" stroke-width=".6"/><path d="M561 200 L563.5 197.5 V207.1 L561 209.6 Z" fill="#3f8fdc" stroke="#434343" stroke-width=".6"/><rect x="554" y="200" width="7" height="9.600000000000001" fill="#68adec" stroke="#434343" stroke-width=".8"/><path d="M561 209.6 L563.5 207.1 V221.5 L561 224.0 Z" fill="#dcdcdc" stroke="#434343" stroke-width=".6"/><rect x="554" y="209.6" width="7" height="14.399999999999999" fill="#fff" stroke="#434343" stroke-width=".8"/><path d="M554 200 L556.5 197.5 H563.5 L561 200 Z" fill="#9ccdf5" stroke="#434343" stroke-width=".6"/><path d="M587 193 V220 L584 224 M587 220 H614" fill="none" stroke="#434343" stroke-width="1"/><path d="M598 200 L600.5 197.5 V214.3 L598 216.8 Z" fill="#3f8fdc" stroke="#434343" stroke-width=".6"/><rect x="591" y="200" width="7" height="16.799999999999997" fill="#68adec" stroke="#434343" stroke-width=".8"/><path d="M598 216.8 L600.5 214.3 V221.5 L598 224.0 Z" fill="#dcdcdc" stroke="#434343" stroke-width=".6"/><rect x="591" y="216.8" width="7" height="7.199999999999999" fill="#fff" stroke="#434343" stroke-width=".8"/><path d="M591 200 L593.5 197.5 H600.5 L598 200 Z" fill="#9ccdf5" stroke="#434343" stroke-width=".6"/><path d="M609 200 L611.5 197.5 V205.9 L609 208.4 Z" fill="#3f8fdc" stroke="#434343" stroke-width=".6"/><rect x="602" y="200" width="7" height="8.399999999999999" fill="#68adec" stroke="#434343" stroke-width=".8"/><path d="M609 208.4 L611.5 205.9 V221.5 L609 224.0 Z" fill="#dcdcdc" stroke="#434343" stroke-width=".6"/><rect x="602" y="208.4" width="7" height="15.600000000000001" fill="#fff" stroke="#434343" stroke-width=".8"/><path d="M602 200 L604.5 197.5 H611.5 L609 200 Z" fill="#9ccdf5" stroke="#434343" stroke-width=".6"/><path d="M636 193 V220 L633 224 M636 220 H663" fill="none" stroke="#434343" stroke-width="1"/><path d="M652 199 L654.5 196.5 V216.5 L652 219 Z" fill="#3f8fdc" stroke="#434343" stroke-width=".6"/><rect x="648" y="199" width="4" height="20" fill="#68adec" stroke="#434343" stroke-width=".8"/><path d="M648 199 L650.5 196.5 H654.5 L652 199 Z" fill="#9ccdf5" stroke="#434343" stroke-width=".6"/><path d="M662 200 L664.5 197.5 V216.5 L662 219 Z" fill="#3f8fdc" stroke="#434343" stroke-width=".6"/><rect x="658" y="200" width="4" height="19" fill="#68adec" stroke="#434343" stroke-width=".8"/><path d="M658 200 L660.5 197.5 H664.5 L662 200 Z" fill="#9ccdf5" stroke="#434343" stroke-width=".6"/><path d="M644.5 209 L647.0 206.5 V221.5 L644.5 224 Z" fill="#dcdcdc" stroke="#434343" stroke-width=".6"/><rect x="640" y="209" width="4.5" height="15" fill="#fff" stroke="#434343" stroke-width=".8"/><path d="M640 209 L642.5 206.5 H647.0 L644.5 209 Z" fill="#f4f4f4" stroke="#434343" stroke-width=".6"/><path d="M655.5 204 L658.0 201.5 V221.5 L655.5 224 Z" fill="#dcdcdc" stroke="#434343" stroke-width=".6"/><rect x="651" y="204" width="4.5" height="20" fill="#fff" stroke="#434343" stroke-width=".8"/><path d="M651 204 L653.5 201.5 H658.0 L655.5 204 Z" fill="#f4f4f4" stroke="#434343" stroke-width=".6"/></svg>
  <div class="a" style="left:333px;top:238px;width:399px;height:1px;background:#e0e0e0"></div>
  <div class="t" style="left:333.5px;top:247.1px;font-size:13.5px;color:#3a3a3a">Clustered Column</div>
  <svg class="a" style="left:333px;top:266px" width="195" height="120" viewBox="333 266 195 120"><rect x="333.5" y="266.5" width="194" height="118.5" fill="#d9d9d9" stroke="#a9a9a9" stroke-width="1"/><rect x="336.5" y="269.2" width="188" height="112.3" fill="#fff" stroke="#c9c9c9" stroke-width=".6"/><text x="430" y="280.6" font-family="Liberation Sans" font-size="6.6" fill="#555" text-anchor="middle">Sales</text><line x1="369.5" x2="519.5" y1="288.60" y2="288.60" stroke="#e2e2e2" stroke-width=".8"/><text x="364.3" y="290.10" font-family="Liberation Sans" font-size="4.4" fill="#4a4a4a" text-anchor="end">$70,000,000</text><line x1="369.5" x2="519.5" y1="300.23" y2="300.23" stroke="#e2e2e2" stroke-width=".8"/><text x="364.3" y="301.73" font-family="Liberation Sans" font-size="4.4" fill="#4a4a4a" text-anchor="end">$60,000,000</text><line x1="369.5" x2="519.5" y1="311.86" y2="311.86" stroke="#e2e2e2" stroke-width=".8"/><text x="364.3" y="313.36" font-family="Liberation Sans" font-size="4.4" fill="#4a4a4a" text-anchor="end">$50,000,000</text><line x1="369.5" x2="519.5" y1="323.49" y2="323.49" stroke="#e2e2e2" stroke-width=".8"/><text x="364.3" y="324.99" font-family="Liberation Sans" font-size="4.4" fill="#4a4a4a" text-anchor="end">$40,000,000</text><line x1="369.5" x2="519.5" y1="335.11" y2="335.11" stroke="#e2e2e2" stroke-width=".8"/><text x="364.3" y="336.61" font-family="Liberation Sans" font-size="4.4" fill="#4a4a4a" text-anchor="end">$30,000,000</text><line x1="369.5" x2="519.5" y1="346.74" y2="346.74" stroke="#e2e2e2" stroke-width=".8"/><text x="364.3" y="348.24" font-family="Liberation Sans" font-size="4.4" fill="#4a4a4a" text-anchor="end">$20,000,000</text><line x1="369.5" x2="519.5" y1="358.37" y2="358.37" stroke="#e2e2e2" stroke-width=".8"/><text x="364.3" y="359.87" font-family="Liberation Sans" font-size="4.4" fill="#4a4a4a" text-anchor="end">$10,000,000</text><line x1="369.5" x2="519.5" y1="370.00" y2="370.00" stroke="#e2e2e2" stroke-width=".8"/><text x="364.3" y="371.50" font-family="Liberation Sans" font-size="4.4" fill="#4a4a4a" text-anchor="end">$-</text><rect x="376.40" y="313.35" width="5.6" height="56.65" fill="#4472c4"/><text x="379.20" y="377.6" font-family="Liberation Sans" font-size="4.4" fill="#4a4a4a" text-anchor="middle">2014</text><rect x="394.97" y="296.67" width="5.6" height="73.33" fill="#4472c4"/><text x="397.77" y="377.6" font-family="Liberation Sans" font-size="4.4" fill="#4a4a4a" text-anchor="middle">2015</text><rect x="413.54" y="303.51" width="5.6" height="66.49" fill="#4472c4"/><text x="416.34" y="377.6" font-family="Liberation Sans" font-size="4.4" fill="#4a4a4a" text-anchor="middle">2016</text><rect x="432.11" y="329.36" width="5.6" height="40.64" fill="#4472c4"/><text x="434.91" y="377.6" font-family="Liberation Sans" font-size="4.4" fill="#4a4a4a" text-anchor="middle">2017</text><rect x="450.68" y="318.33" width="5.6" height="51.67" fill="#4472c4"/><text x="453.48" y="377.6" font-family="Liberation Sans" font-size="4.4" fill="#4a4a4a" text-anchor="middle">2018</text><rect x="469.25" y="299.16" width="5.6" height="70.84" fill="#4472c4"/><text x="472.05" y="377.6" font-family="Liberation Sans" font-size="4.4" fill="#4a4a4a" text-anchor="middle">2019</text><rect x="487.82" y="305.22" width="5.6" height="64.78" fill="#4472c4"/><text x="490.62" y="377.6" font-family="Liberation Sans" font-size="4.4" fill="#4a4a4a" text-anchor="middle">2020</text><rect x="506.39" y="314.96" width="5.6" height="55.04" fill="#4472c4"/><text x="509.19" y="377.6" font-family="Liberation Sans" font-size="4.4" fill="#4a4a4a" text-anchor="middle">2021</text></svg>
  <svg class="a" style="left:530px;top:268px" width="192" height="116" viewBox="530 268 192 116"><rect x="535.5" y="269.8" width="183.5" height="112" fill="#fff" stroke="#dcdcdc" stroke-width=".8"/><text x="624.7" y="280.3" font-family="Liberation Sans" font-size="6.4" fill="#555" text-anchor="middle">Chart Title</text><line x1="564" x2="712.5" y1="288.10" y2="288.10" stroke="#e2e2e2" stroke-width=".8"/><text x="558.9" y="289.60" font-family="Liberation Sans" font-size="4.4" fill="#4a4a4a" text-anchor="end">$70,000,000</text><line x1="564" x2="712.5" y1="298.07" y2="298.07" stroke="#e2e2e2" stroke-width=".8"/><text x="558.9" y="299.57" font-family="Liberation Sans" font-size="4.4" fill="#4a4a4a" text-anchor="end">$60,000,000</text><line x1="564" x2="712.5" y1="308.04" y2="308.04" stroke="#e2e2e2" stroke-width=".8"/><text x="558.9" y="309.54" font-family="Liberation Sans" font-size="4.4" fill="#4a4a4a" text-anchor="end">$50,000,000</text><line x1="564" x2="712.5" y1="318.01" y2="318.01" stroke="#e2e2e2" stroke-width=".8"/><text x="558.9" y="319.51" font-family="Liberation Sans" font-size="4.4" fill="#4a4a4a" text-anchor="end">$40,000,000</text><line x1="564" x2="712.5" y1="327.99" y2="327.99" stroke="#e2e2e2" stroke-width=".8"/><text x="558.9" y="329.49" font-family="Liberation Sans" font-size="4.4" fill="#4a4a4a" text-anchor="end">$30,000,000</text><line x1="564" x2="712.5" y1="337.96" y2="337.96" stroke="#e2e2e2" stroke-width=".8"/><text x="558.9" y="339.46" font-family="Liberation Sans" font-size="4.4" fill="#4a4a4a" text-anchor="end">$20,000,000</text><line x1="564" x2="712.5" y1="347.93" y2="347.93" stroke="#e2e2e2" stroke-width=".8"/><text x="558.9" y="349.43" font-family="Liberation Sans" font-size="4.4" fill="#4a4a4a" text-anchor="end">$10,000,000</text><line x1="564" x2="712.5" y1="357.90" y2="357.90" stroke="#e2e2e2" stroke-width=".8"/><text x="558.9" y="359.40" font-family="Liberation Sans" font-size="4.4" fill="#4a4a4a" text-anchor="end">$-</text><rect x="578.00" y="309.32" width="12.2" height="48.58" fill="#4472c4"/><rect x="593.63" y="295.02" width="12.2" height="62.88" fill="#ed7d31"/><rect x="609.26" y="300.89" width="12.2" height="57.01" fill="#a5a5a5"/><rect x="624.89" y="323.05" width="12.2" height="34.85" fill="#ffc000"/><rect x="640.52" y="313.59" width="12.2" height="44.31" fill="#5b9bd5"/><rect x="656.15" y="297.15" width="12.2" height="60.75" fill="#70ad47"/><rect x="671.78" y="302.35" width="12.2" height="55.55" fill="#264478"/><rect x="687.41" y="310.71" width="12.2" height="47.19" fill="#9e480e"/><text x="638.8" y="365.6" font-family="Liberation Sans" font-size="4.4" fill="#4a4a4a" text-anchor="middle">Sales</text><rect x="559.40" y="372.8" width="2.4" height="2.4" fill="#4472c4"/><text x="562.70" y="375.5" font-family="Liberation Sans" font-size="3.9" fill="#4a4a4a">2014</text><rect x="576.55" y="372.8" width="2.4" height="2.4" fill="#ed7d31"/><text x="579.85" y="375.5" font-family="Liberation Sans" font-size="3.9" fill="#4a4a4a">2015</text><rect x="593.70" y="372.8" width="2.4" height="2.4" fill="#a5a5a5"/><text x="597.00" y="375.5" font-family="Liberation Sans" font-size="3.9" fill="#4a4a4a">2016</text><rect x="610.85" y="372.8" width="2.4" height="2.4" fill="#ffc000"/><text x="614.15" y="375.5" font-family="Liberation Sans" font-size="3.9" fill="#4a4a4a">2017</text><rect x="628.00" y="372.8" width="2.4" height="2.4" fill="#5b9bd5"/><text x="631.30" y="375.5" font-family="Liberation Sans" font-size="3.9" fill="#4a4a4a">2018</text><rect x="645.15" y="372.8" width="2.4" height="2.4" fill="#70ad47"/><text x="648.45" y="375.5" font-family="Liberation Sans" font-size="3.9" fill="#4a4a4a">2019</text><rect x="662.30" y="372.8" width="2.4" height="2.4" fill="#264478"/><text x="665.60" y="375.5" font-family="Liberation Sans" font-size="3.9" fill="#4a4a4a">2020</text><rect x="679.45" y="372.8" width="2.4" height="2.4" fill="#9e480e"/><text x="682.75" y="375.5" font-family="Liberation Sans" font-size="3.9" fill="#4a4a4a">2021</text></svg>
  <div class="a" style="left:322.3px;top:236.9px;width:214.2px;height:168px;border:2.3px solid #e8383a;box-shadow:1px 2px 2px rgba(0,0,0,.25), inset 1px 2px 2px rgba(0,0,0,.2)"></div>
  <div class="a" style="left:615.5px;top:621px;width:59.2px;height:18.8px;background:#e1e1e1;border:2px solid #0a78d7"></div>
  <div class="t" style="left:615.5px;width:59.2px;text-align:center;top:627px;font-size:9.2px;color:#333">OK</div>
  <div class="a" style="left:684px;top:621px;width:59.5px;height:18.8px;background:#e1e1e1;border:1px solid #adadad"></div>
  <div class="t" style="left:684px;width:59.5px;text-align:center;top:627px;font-size:9.2px;color:#333">Cancel</div>
  <svg class="a" style="left:742px;top:638px" width="8" height="8" viewBox="0 0 8 8"><g fill="#a0a0a0"><rect x="5" y="1" width="1.3" height="1.3"/><rect x="3" y="3" width="1.3" height="1.3"/><rect x="5" y="3" width="1.3" height="1.3"/><rect x="1" y="5" width="1.3" height="1.3"/><rect x="3" y="5" width="1.3" height="1.3"/><rect x="5" y="5" width="1.3" height="1.3"/></g></svg>
  <svg class="a" style="left:455px;top:148px" width="11" height="15" viewBox="0 0 11 15"><path d="M.8 .8 V12.5 L3.6 9.8 L5.6 14.2 L7.4 13.4 L5.5 9.2 H9.6 Z" fill="#fff" stroke="#222" stroke-width="1" stroke-linejoin="round"/></svg>
</div>
<div id="frame"></div>
</body></html>
